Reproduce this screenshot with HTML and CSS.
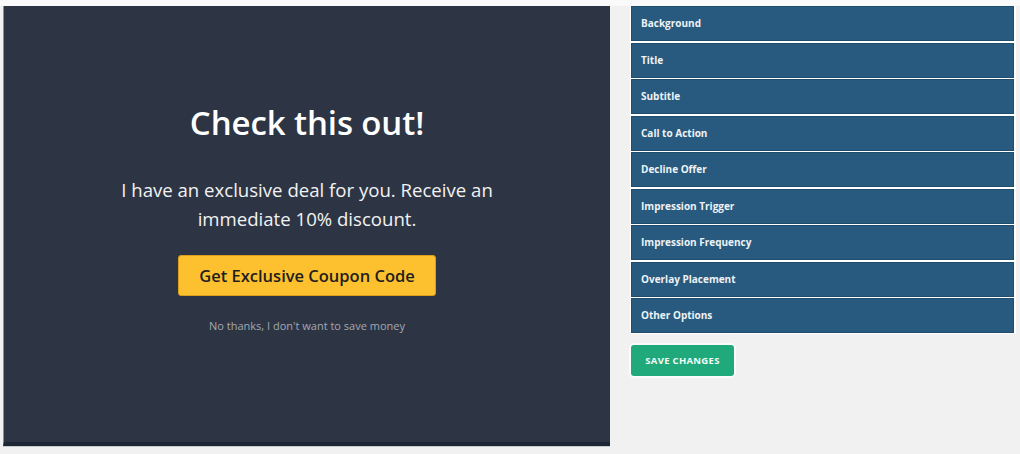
FILE: index.html
```html
<!DOCTYPE html>
<html>
<head>
<meta charset="utf-8">
<link rel="stylesheet" href="styles.css">
</head>
<body>
<div class="page">
  <div class="preview">
    <h1 class="title">Check this out!</h1>
    <p class="subtitle">I have an exclusive deal for you. Receive an immediate 10% discount.</p>
    <button class="cta">Get Exclusive Coupon Code</button>
    <p class="decline">No thanks, I don't want to save money</p>
  </div>
  <div class="sidebar">
    <div class="panel">
      <div class="item">Background</div>
      <div class="item">Title</div>
      <div class="item">Subtitle</div>
      <div class="item">Call to Action</div>
      <div class="item">Decline Offer</div>
      <div class="item">Impression Trigger</div>
      <div class="item">Impression Frequency</div>
      <div class="item">Overlay Placement</div>
      <div class="item">Other Options</div>
    </div>
    <button class="save">SAVE CHANGES</button>
  </div>
</div>
</body>
</html>
```
FILE: styles.css
```css
html, body {
  margin: 0;
  padding: 0;
  background: #f1f1f1;
  font-family: "Open Sans", "Noto Sans", sans-serif;
}
.page {
  display: flex;
  align-items: flex-start;
  padding: 6px 4px 0 3px;
  gap: 20px;
  background: linear-gradient(#fafafa 0, #fafafa 6px, #f1f1f1 6px);
  height: 454px;
  box-sizing: border-box;
}
.preview {
  width: 607px;
  height: 440px;
  box-sizing: border-box;
  background: #2d3545;
  border-left: 1px solid #8a909a;
  border-bottom: 4px solid #1d2634;
  box-shadow: 0 1px 0 #c9cbce;
  display: flex;
  flex-direction: column;
  align-items: center;
  padding-top: 93px;
  color: #fff;
}
.title {
  margin: 0;
  font-size: 33px;
  font-weight: 600;
  line-height: 48px;
  letter-spacing: -0.1px;
}
.subtitle {
  margin: 28px 0 0;
  width: 400px;
  text-align: center;
  font-size: 18.6px;
  line-height: 29px;
  color: #f2f2f2;
}
.cta {
  margin-top: 22px;
  width: 258px;
  height: 41px;
  background: #fdc02f;
  border: 1px solid #d99e1b;
  border-radius: 3px;
  font-family: "Open Sans", sans-serif;
  font-size: 16.5px;
  font-weight: 600;
  color: #1e1e1e;
  padding: 0;
}
.decline {
  margin: 22px 0 0;
  font-size: 11px;
  color: #a3a8b1;
}
.sidebar {
  width: 386px;
  display: flex;
  flex-direction: column;
  align-items: flex-start;
}
.panel {
  width: 100%;
  background: #fff;
  padding: 0 2px 1px 1px;
  box-sizing: border-box;
  display: flex;
  flex-direction: column;
  gap: 1.5px;
}
.item {
  height: 35px;
  background: #275a7e;
  border: 1px solid #1f4d6e;
  box-sizing: border-box;
  color: #eef2f6;
  font-size: 10px;
  font-weight: 700;
  line-height: 33px;
  padding-left: 9px;
}
.save {
  margin-top: 11px;
  margin-left: 1px;
  width: 103px;
  height: 31px;
  background: #20a97a;
  border: 0;
  border-radius: 3px;
  box-shadow: 0 0 0 2px #fafafa;
  color: #f3fbf7;
  font-family: "Open Sans", sans-serif;
  font-size: 9.5px;
  font-weight: 700;
  letter-spacing: 0.3px;
  padding: 0;
}
```
